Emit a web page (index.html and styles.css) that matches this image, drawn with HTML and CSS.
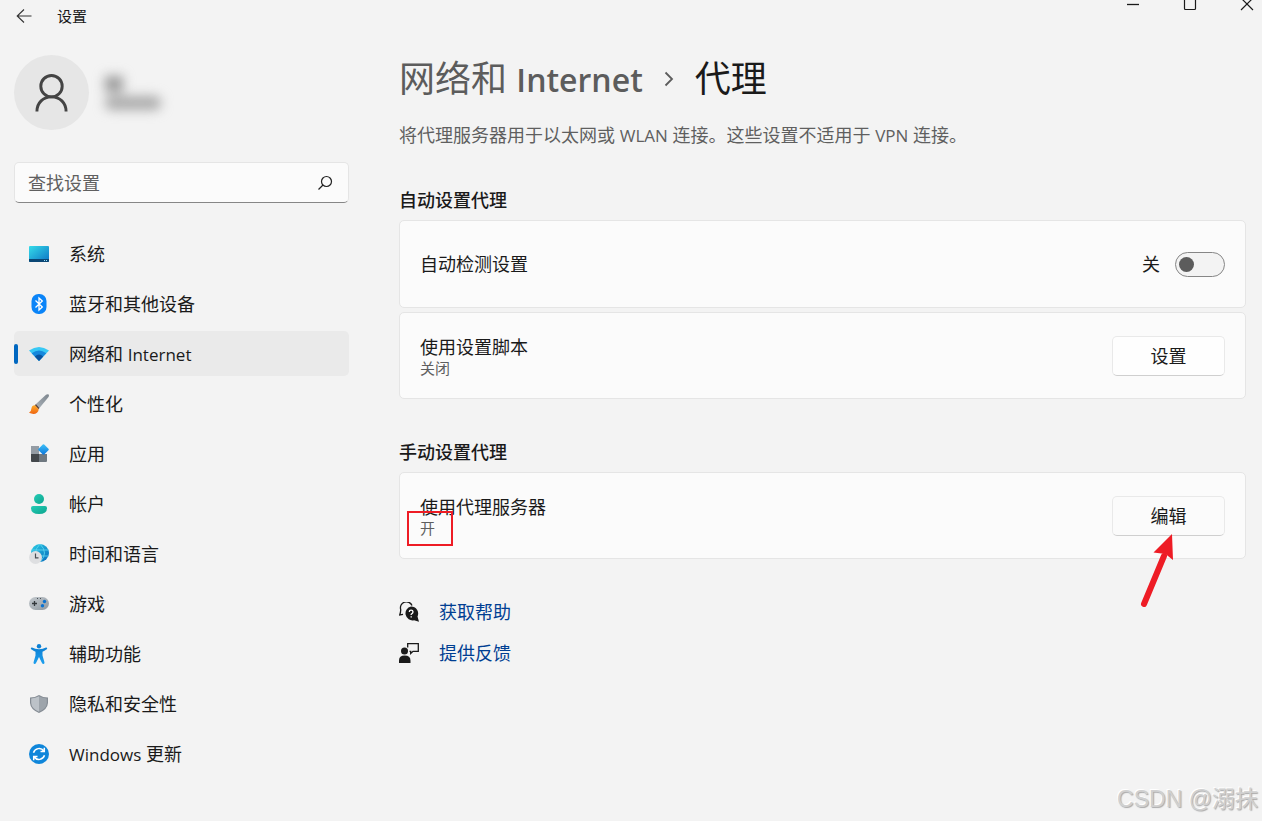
FILE: index.html
```
<!DOCTYPE html>
<html lang="zh-CN">

<head>
    <meta charset="UTF-8">
    <meta name="viewport" content="width=device-width, initial-scale=1.0">
    <title>设置</title>
    <link rel="stylesheet" href="styles.css">
</head>

<body>
    <header class="titlebar">
        <button class="back-button" type="button" aria-label="返回">
            <svg width="16" height="16" viewBox="0 0 16 16" fill="none" stroke="#333" stroke-width="1.1"><path d="M8 1.5 1.2 8 8 14.5M1.2 8H15.5"/></svg>
        </button>
        <span class="titlebar-text">设置</span>
        <div class="window-buttons">
            <button type="button" aria-label="最小化">
                <svg width="14" height="14" viewBox="0 0 14 14" fill="none" stroke="#1a1a1a" stroke-width="1.3"><path d="M1 7.5H13"/></svg>
            </button>
            <button type="button" aria-label="最大化">
                <svg width="14" height="14" viewBox="0 0 14 14" fill="none" stroke="#1a1a1a" stroke-width="1.2"><rect x="1.5" y="1.5" width="11" height="11" rx="1"/></svg>
            </button>
            <button type="button" aria-label="关闭">
                <svg width="14" height="14" viewBox="0 0 14 14" fill="none" stroke="#1a1a1a" stroke-width="1.2"><path d="M1 1 13 13M13 1 1 13"/></svg>
            </button>
        </div>
    </header>

    <div class="layout">
        <aside class="sidebar">
            <div class="profile">
                <div class="avatar">
                    <svg width="35" height="40" viewBox="0 0 36 40" fill="none" stroke="#444" stroke-width="3"><circle cx="18" cy="13" r="11"/><path d="M3 39C3 30 9.500 24 18 24s15 6 15 15"/></svg>
                </div>
                <div class="profile-name">
                    <span class="name-line"></span>
                    <span class="mail-line"></span>
                </div>
            </div>

            <form class="search">
                <input type="text" placeholder="查找设置" aria-label="查找设置">
                <button type="button" aria-label="搜索">
                    <svg width="16" height="16" viewBox="0 0 16 16" fill="none" stroke="#222" stroke-width="1.2"><circle cx="9.500" cy="6.500" r="5"/><path d="M6 10 1.500 14.500"/></svg>
                </button>
            </form>

            <nav class="menu">
                <a class="menu-item" href="#">
                    <svg width="20" height="20" viewBox="0 0 20 20">
                        <defs><linearGradient id="g-system" x1="0" y1="0" x2="1" y2="1"><stop stop-color="#35dce9"/><stop offset="1" stop-color="#0c72c4"/></linearGradient></defs>
                        <rect y="2" width="20" height="16" rx="1" fill="url(#g-system)"/>
                        <path d="M0 15h20v2q0 1-1 1H1q-1 0-1-1z" fill="#0a4674"/>
                        <path d="M15 16.500h1M17 16.500h1" stroke="#9ce4ff"/>
                    </svg>
                    <span>系统</span>
                </a>
                <a class="menu-item" href="#">
                    <svg width="20" height="20" viewBox="0 0 20 20">
                        <rect x="2.500" width="15" height="20" rx="7" fill="#0a84f8"/>
                        <path d="M6.500 6.500 13.300 13 10 16V4l3.300 3-6.800 6.500" fill="none" stroke="#fff" stroke-width="1.300"/>
                    </svg>
                    <span>蓝牙和其他设备</span>
                </a>
                <a class="menu-item active" href="#" aria-current="page">
                    <svg width="20" height="20" viewBox="0 0 20 20">
                        <path d="M0 6.500Q10-.500 20 6.500L10 17z" fill="#38c8f4"/>
                        <path d="M2.700 9.300Q10 3.500 17.300 9.300L10 17z" fill="#1688dc"/>
                        <path d="M5.800 12.600Q10 8.500 14.200 12.600L10 17z" fill="#0a54a0"/>
                    </svg>
                    <span>网络和 <span class="latin">Internet</span></span>
                </a>
                <a class="menu-item" href="#">
                    <svg width="20" height="20" viewBox="0 0 20 20">
                        <defs>
                            <linearGradient id="g-brush" x1="1" y1="0" x2="0" y2="1"><stop stop-color="#7c858d"/><stop offset="1" stop-color="#a9b1b8"/></linearGradient>
                            <linearGradient id="g-paint" x1="0" y1="0" x2="0" y2="1"><stop stop-color="#ffad2a"/><stop offset="1" stop-color="#ee6512"/></linearGradient>
                        </defs>
                        <path d="M7 10 17 .700Q18.500-.300 19.700.600 20.300 1.600 19.500 3L10.500 14z" fill="url(#g-brush)"/>
                        <path d="M7 10 10.500 14 9.300 15.200 5.800 11.300z" fill="#5e4640"/>
                        <path d="M6 11.200Q3 11 2.400 14.500 2.300 17.500 0 18.800 5 21 8 18.700 10 17 9.500 15z" fill="url(#g-paint)"/>
                    </svg>
                    <span>个性化</span>
                </a>
                <a class="menu-item" href="#">
                    <svg width="20" height="20" viewBox="0 0 20 20">
                        <defs><linearGradient id="g-apps" x1="0" y1="0" x2="1" y2="1"><stop stop-color="#3fc4fa"/><stop offset="1" stop-color="#0a72d8"/></linearGradient></defs>
                        <path d="M2 2h8v8H2z" fill="#949ca4"/>
                        <path d="M2 10h8v8H3q-1 0-1-1z" fill="#43484c"/>
                        <path d="M10 10h8v7q0 1-1 1h-7z" fill="#6f7880"/>
                        <rect x="10.500" y="1.500" width="8" height="8" rx="1" transform="rotate(45 14.500 5.500)" fill="url(#g-apps)"/>
                    </svg>
                    <span>应用</span>
                </a>
                <a class="menu-item" href="#">
                    <svg width="20" height="20" viewBox="0 0 20 20">
                        <defs><linearGradient id="g-user" x1="0" y1="0" x2="1" y2="1"><stop stop-color="#26ccb6"/><stop offset="1" stop-color="#0ca58e"/></linearGradient></defs>
                        <circle cx="10" cy="5" r="5" fill="url(#g-user)"/>
                        <path d="M4 12h12q2 0 2 2 0 6-8 6t-8-6q0-2 2-2z" fill="url(#g-user)"/>
                    </svg>
                    <span>帐户</span>
                </a>
                <a class="menu-item" href="#">
                    <svg width="20" height="20" viewBox="0 0 20 20">
                        <defs><linearGradient id="g-globe" x1="0" y1="0" x2="1" y2="1"><stop stop-color="#2cd0e6"/><stop offset="1" stop-color="#0868ba"/></linearGradient></defs>
                        <circle cx="11" cy="9" r="9" fill="url(#g-globe)"/>
                        <path d="M2.500 6h17M2.500 12h17M11 0q-9 9 0 18M11 0q9 9 0 18" fill="none" stroke="#62d8f2" stroke-width=".8"/>
                        <circle cx="6.500" cy="13.500" r="6.500" fill="#dedfe1"/>
                        <path d="M6.500 9.500V13.800H9.500" fill="none" stroke="#4a4f55" stroke-width="1.200"/>
                    </svg>
                    <span>时间和语言</span>
                </a>
                <a class="menu-item" href="#">
                    <svg width="20" height="20" viewBox="0 0 20 20">
                        <defs><linearGradient id="g-game" x1="0" y1="0" x2="1" y2="1"><stop stop-color="#c3c9ce"/><stop offset="1" stop-color="#8f989f"/></linearGradient></defs>
                        <rect y="3" width="20" height="13" rx="6.500" fill="url(#g-game)"/>
                        <path d="M5.500 7v5M3 9.500h5" stroke="#33383c" stroke-width="1.300"/>
                        <circle cx="15.500" cy="7.500" r="1.700" fill="#0a72d0"/>
                        <circle cx="13.500" cy="11.700" r="1.700" fill="#0a72d0"/>
                        <path d="M8 4.500h1M11 4.500h1" stroke="#4a5055"/>
                    </svg>
                    <span>游戏</span>
                </a>
                <a class="menu-item" href="#">
                    <svg width="20" height="20" viewBox="0 0 20 20">
                        <defs><linearGradient id="g-access" x1="0" y1="0" x2="0" y2="1"><stop stop-color="#0d80d4"/><stop offset="1" stop-color="#1ea0ee"/></linearGradient></defs>
                        <circle cx="10" cy="2.200" r="2.200" fill="#0d80d4"/>
                        <path d="M3 3.500Q6 5.300 10 5.300T17 3.500Q18.300 3.500 18.200 4.800 18 5.500 13.500 7.700V11.500L15.500 18.500Q15.500 20 14.300 20 13.400 20 13 19L10 13 7 19Q6.600 20 5.700 20 4.500 20 4.500 18.500L6.500 11.500V7.700Q2 5.500 1.800 4.800 1.700 3.500 3 3.500z" fill="url(#g-access)"/>
                    </svg>
                    <span>辅助功能</span>
                </a>
                <a class="menu-item" href="#">
                    <svg width="20" height="20" viewBox="0 0 20 20">
                        <path d="M10 1Q14 3.500 19 3.500V9Q18.500 15.500 10 19 1.500 15.500 1 9V3.500Q6 3.500 10 1z" fill="#858c94"/>
                        <path d="M10 2.200V17.700Q2.500 14.500 2.200 9V4.500Q6.500 4.300 10 2.200z" fill="#bcc2c8"/>
                        <path d="M10 2.200V17.700Q17.500 14.500 17.800 9V4.500Q13.500 4.300 10 2.200z" fill="#9da4ab"/>
                    </svg>
                    <span>隐私和安全性</span>
                </a>
                <a class="menu-item" href="#">
                    <svg width="20" height="20" viewBox="0 0 20 20">
                        <circle cx="10" cy="10" r="10" fill="#0f86da"/>
                        <path d="M4.500 8.700A5.800 5.800 0 0 1 14.800 7M15.500 11.300A5.800 5.800 0 0 1 5.200 13M15.300 3.800V7.500H11.500M4.700 16.200V12.500H8.500" fill="none" stroke="#fff" stroke-width="1.500"/>
                    </svg>
                    <span><span class="latin">Windows</span> 更新</span>
                </a>
            </nav>
        </aside>

        <main class="content">
            <h1 class="breadcrumb">
                <a href="#">网络和 <span class="latin">Internet</span></a>
                <svg width="12" height="16" viewBox="0 0 12 16" fill="none" stroke="#5c5c5c" stroke-width="1.800"><path d="M2.500 1.500 9 8 2.500 14.500"/></svg>
                <span>代理</span>
            </h1>
            <p class="description">将代理服务器用于以太网或 <span class="latin">WLAN</span> 连接。这些设置不适用于 <span class="latin">VPN</span> 连接。</p>

            <section class="group">
                <h2>自动设置代理</h2>
                <div class="card card-toggle">
                    <label class="card-title" for="autoDetect">自动检测设置</label>
                    <div class="toggle">
                        <label for="autoDetect">关</label>
                        <input type="checkbox" role="switch" id="autoDetect">
                    </div>
                </div>
                <div class="card">
                    <div class="card-text">
                        <div class="card-title">使用设置脚本</div>
                        <div class="card-status">关闭</div>
                    </div>
                    <button class="card-button" type="button">设置</button>
                </div>
            </section>

            <section class="group">
                <h2>手动设置代理</h2>
                <div class="card">
                    <div class="card-text">
                        <div class="card-title">使用代理服务器</div>
                        <div class="card-status">开</div>
                    </div>
                    <button class="card-button plain" type="button">编辑</button>
                    <span class="mark-box"></span>
                    <svg class="mark-arrow" width="36" height="74" viewBox="0 0 36 74">
                        <path d="M6 70 26 22" stroke="#ee1c25" stroke-width="6" stroke-linecap="round"/>
                        <path d="M34 0 35 26 27.500 20 15.500 18.500z" fill="#ee1c25"/>
                    </svg>
                </div>
            </section>

            <div class="help-links">
                <a href="#">
                    <svg width="20" height="20" viewBox="0 0 20 20">
                        <path d="M13 3.500A6 6 0 0 0 1.700 7.500Q1.800 10 .700 13L4 12.300" fill="none" stroke="#1a1a1a" stroke-width="1.300"/>
                        <path d="M12 4.500a7 7 0 0 1 6.500 10L20 19.700 15 18.200A7 7 0 1 1 12 4.500z" fill="#1a1a1a"/>
                        <path d="M10.300 10q0-1.800 1.800-1.800T14 9.900Q14 11 12.200 12.300V13M12.200 14.200v1.300" fill="none" stroke="#fff" stroke-width="1.300"/>
                    </svg>
                    <span>获取帮助</span>
                </a>
                <a href="#">
                    <svg width="20" height="20" viewBox="0 0 20 20">
                        <circle cx="5.500" cy="8" r="3.500" fill="#1a1a1a"/>
                        <path d="M0 20V17.500Q0 12.500 5.700 12.500T11.500 17.500V20z" fill="#1a1a1a"/>
                        <path d="M8.700 4.500V.700H19.300V8.300H14L11.700 10.500V8.300H10.500" fill="none" stroke="#1a1a1a" stroke-width="1.300"/>
                    </svg>
                    <span>提供反馈</span>
                </a>
            </div>
        </main>
    </div>

    <div class="watermark">CSDN @溺抹</div>
</body>

</html>
```
FILE: styles.css
```
* {
    box-sizing: border-box;
}

body {
    position: relative;
    min-height: 100vh;
    margin: 0;
    background: #f3f3f3;
    color: #1a1a1a;
    font-family: "Open Sans", "Noto Sans CJK SC", sans-serif;
    font-size: 18px;
    line-height: 24px;
}

a {
    color: inherit;
    text-decoration: none;
}

button {
    padding: 0;
    border: none;
    background: none;
    color: inherit;
    font: inherit;
}

svg {
    display: block;
    flex: none;
}

.latin {
    font-size: 17px;
    line-height: 1;
}

/* title bar */
.titlebar {
    display: flex;
    align-items: center;
    height: 32px;
    padding-left: 16px;
    overflow: hidden;
}

.titlebar-text {
    margin-left: 25px;
    font-size: 15px;
}

.window-buttons {
    display: flex;
    align-self: flex-start;
    gap: 43px;
    margin-left: auto;
    margin-top: -3px;
    padding-right: 8px;
}

.layout {
    display: flex;
    gap: 50px;
    padding: 23px 16px 0 14px;
}

/* sidebar */
.sidebar {
    flex: none;
    width: 335px;
}

.profile {
    display: flex;
    align-items: center;
    gap: 16px;
}

.avatar {
    display: flex;
    align-items: center;
    justify-content: center;
    width: 75px;
    height: 75px;
    border-radius: 50%;
    background: #e6e6e6;
}

.profile-name {
    display: flex;
    flex-direction: column;
    gap: 4px;
    filter: blur(6px);
}

.name-line {
    width: 18px;
    height: 16px;
    background: #999;
}

.mail-line {
    width: 56px;
    height: 14px;
    border-radius: 6px;
    background: #aaa;
}

.search {
    display: flex;
    align-items: center;
    height: 41px;
    margin-top: 32px;
    padding: 0 15px 0 13px;
    border: 1px solid #e5e5e5;
    border-bottom-color: #868686;
    border-radius: 5px;
    background: #fbfbfb;
}

.search input {
    flex: 1;
    min-width: 0;
    padding: 0;
    border: none;
    outline: none;
    background: none;
    font: inherit;
}

.search input::placeholder {
    color: #606060;
    opacity: 1;
}

.menu {
    display: flex;
    flex-direction: column;
    gap: 5px;
    margin-top: 28px;
}

.menu-item {
    position: relative;
    display: flex;
    align-items: center;
    gap: 20px;
    height: 45px;
    padding: 0 15px;
    border-radius: 5px;
}

.menu-item.active {
    background: #eaeaea;
}

.menu-item.active::before {
    content: "";
    position: absolute;
    left: 0;
    top: 13px;
    width: 4px;
    height: 20px;
    border-radius: 2px;
    background: #0067c0;
}

/* content */
.content {
    flex: 1;
    min-width: 0;
}

.breadcrumb {
    display: flex;
    align-items: center;
    gap: 20px;
    margin: 0;
    font-size: 36px;
    font-weight: 400;
    line-height: 48px;
}

.breadcrumb a {
    color: #5c5c5c;
}

.breadcrumb .latin {
    font-size: 32px;
    font-weight: 600;
}

.description {
    margin: 20px 0 0;
    color: #5f5f5f;
}

.group {
    display: flex;
    flex-direction: column;
    gap: 4px;
    margin-top: 41px;
}

.group h2 {
    margin: 0 0 4px;
    font-size: 18px;
    font-weight: 500;
}

.card {
    position: relative;
    display: flex;
    align-items: center;
    justify-content: space-between;
    min-height: 87px;
    padding: 0 20px;
    border: 1px solid #e5e5e5;
    border-radius: 5px;
    background: #fbfbfb;
}

.card-toggle {
    min-height: 88px;
}

.card-status {
    color: #5f5f5f;
    font-size: 15px;
    line-height: 18px;
}

.card-button {
    width: 113px;
    height: 40px;
    border: 1px solid #e9e9e9;
    border-bottom-color: #cfcfcf;
    border-radius: 5px;
    background: #fefefe;
}

.card-button.plain {
    background: #fbfbfb;
}

.toggle {
    display: flex;
    align-items: center;
    gap: 15px;
}

.toggle input {
    appearance: none;
    display: flex;
    align-items: center;
    width: 50px;
    height: 25px;
    margin: 0;
    padding: 0 3px;
    border: 1px solid #868686;
    border-radius: 13px;
    background: #f3f3f3;
}

.toggle input::before {
    content: "";
    width: 15px;
    height: 15px;
    border-radius: 50%;
    background: #5c5c5c;
}

.toggle input:checked {
    justify-content: flex-end;
}

/* red marks over the proxy card */
.mark-box {
    position: absolute;
    left: 7px;
    top: 38px;
    width: 46px;
    height: 35px;
    border: 2px solid #ee1c25;
}

.mark-arrow {
    position: absolute;
    right: 71px;
    top: 61px;
}

.help-links {
    display: flex;
    flex-direction: column;
    align-items: flex-start;
    gap: 17px;
    margin-top: 41px;
    color: #003e92;
}

.help-links a {
    display: flex;
    align-items: center;
    gap: 20px;
}

.watermark {
    position: absolute;
    right: 4px;
    bottom: 6px;
    color: #d0d0d0;
    font-family: "Liberation Sans", "Noto Sans CJK SC", sans-serif;
    font-size: 23px;
    line-height: 32px;
    text-shadow: 1px 1px 1px #aaa, -1px -1px 0 #fff;
}
```
